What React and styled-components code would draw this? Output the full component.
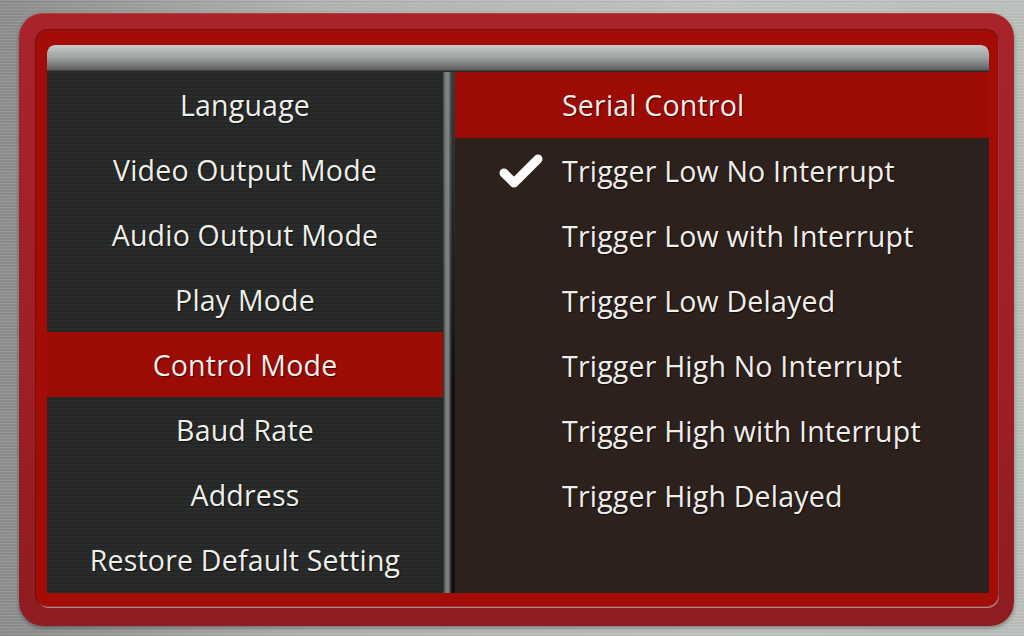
import React from "react";
import styled, { createGlobalStyle } from "styled-components";

const GlobalStyle = createGlobalStyle`
  html, body {
    margin: 0;
    padding: 0;
    width: 1024px;
    height: 636px;
    overflow: hidden;
  }
  body {
    font-family: "Open Sans", "Noto Sans", sans-serif;
    background:
      repeating-linear-gradient(180deg, rgba(255,255,255,0.05) 0 1px, rgba(0,0,0,0.04) 1px 3px),
      linear-gradient(90deg, #8f918f 0%, #b3b5b3 30%, #c3c6c2 70%, #bfc3bf 100%);
  }
`;

const menuItems = [
  "Language",
  "Video Output Mode",
  "Audio Output Mode",
  "Play Mode",
  "Control Mode",
  "Baud Rate",
  "Address",
  "Restore Default Setting",
];

const options = [
  "Trigger Low No Interrupt",
  "Trigger Low with Interrupt",
  "Trigger Low Delayed",
  "Trigger High No Interrupt",
  "Trigger High with Interrupt",
  "Trigger High Delayed",
];

export default function App() {
  const selectedMenu = "Control Mode";
  const checkedOption = "Trigger Low No Interrupt";

  return (
    <>
      <GlobalStyle />
      <Frame>
        <Bezel>
          <Screen>
            <TitleBar />
            <Body>
              <MenuColumn>
                {menuItems.map((item) => (
                  <MenuRow key={item} active={item === selectedMenu}>
                    {item}
                  </MenuRow>
                ))}
              </MenuColumn>
              <Divider />
              <OptionColumn>
                <OptionHeader>Serial Control</OptionHeader>
                {options.map((opt) => (
                  <OptionRow key={opt}>
                    <CheckSlot>
                      {opt === checkedOption && (
                        <svg width="44" height="36" viewBox="0 0 44 36">
                          <path
                            d="M5 20 L15 30 L39 6"
                            fill="none"
                            stroke="#fbfbfb"
                            strokeWidth="9"
                            strokeLinecap="round"
                            strokeLinejoin="round"
                          />
                        </svg>
                      )}
                    </CheckSlot>
                    {opt}
                  </OptionRow>
                ))}
              </OptionColumn>
            </Body>
          </Screen>
        </Bezel>
      </Frame>
    </>
  );
}

const Frame = styled.div`
  box-sizing: border-box;
  margin: 13px 0 0 19px;
  width: 995px;
  height: 613px;
  padding: 17px 16px 20px 17px;
  border-radius: 24px;
  background: linear-gradient(180deg, #a8242a 0%, #9e1f24 60%, #8e1c20 100%);
  box-shadow: 0 2px 4px rgba(0, 0, 0, 0.35), inset 0 1px 0 rgba(255, 255, 255, 0.12);
`;

const Bezel = styled.div`
  box-sizing: border-box;
  height: 100%;
  padding: 15px 9px 13px 11px;
  border-radius: 12px;
  background: #a30c07;
  box-shadow: 0 0 0 1px rgba(60, 0, 0, 0.5), 1px 2px 0 rgba(255, 210, 200, 0.55);
`;

const Screen = styled.div`
  display: flex;
  flex-direction: column;
  height: 100%;
  border-radius: 8px 8px 0 0;
  overflow: hidden;
`;

const TitleBar = styled.div`
  height: 27px;
  flex: none;
  border-radius: 8px 8px 0 0;
  background: linear-gradient(180deg, #c6cbca 0%, #9fa3a2 45%, #626563 90%, #1c1c1c 100%);
`;

const Body = styled.div`
  flex: 1;
  display: flex;
`;

const MenuColumn = styled.div`
  width: 396px;
  display: flex;
  flex-direction: column;
  background:
    repeating-linear-gradient(180deg, rgba(255,255,255,0.018) 0 2px, rgba(0,0,0,0.03) 2px 4px),
    #252826;
`;

const Label = styled.div`
  height: 65px;
  display: flex;
  align-items: center;
  font-size: 28.5px;
  letter-spacing: 0.2px;
  color: #eeeeea;
  text-shadow: 1px 1px 1px rgba(0, 0, 0, 0.6);
`;

const MenuRow = styled(Label)`
  justify-content: center;
  background: ${({ active }) => (active ? "#9d0b05" : "transparent")};
`;

const Divider = styled.div`
  width: 12px;
  background:
    linear-gradient(180deg, rgba(130,138,135,0.35) 0%, rgba(0,0,0,0) 60%),
    linear-gradient(90deg, #242725 0%, #6f7673 20%, #7d8583 45%, #3a3d3b 60%, #0c0c0c 80%, #1a1312 100%);
`;

const OptionColumn = styled.div`
  flex: 1;
  display: flex;
  flex-direction: column;
  background: #2d211e;
`;

const OptionHeader = styled(Label)`
  height: 66px;
  padding-left: 107px;
  background: #9d0b05;
`;

const OptionRow = styled(Label)``;

const CheckSlot = styled.div`
  width: 107px;
  flex: none;
  display: flex;
  align-items: center;
  justify-content: flex-end;
  padding-right: 19px;
  box-sizing: border-box;
`;
